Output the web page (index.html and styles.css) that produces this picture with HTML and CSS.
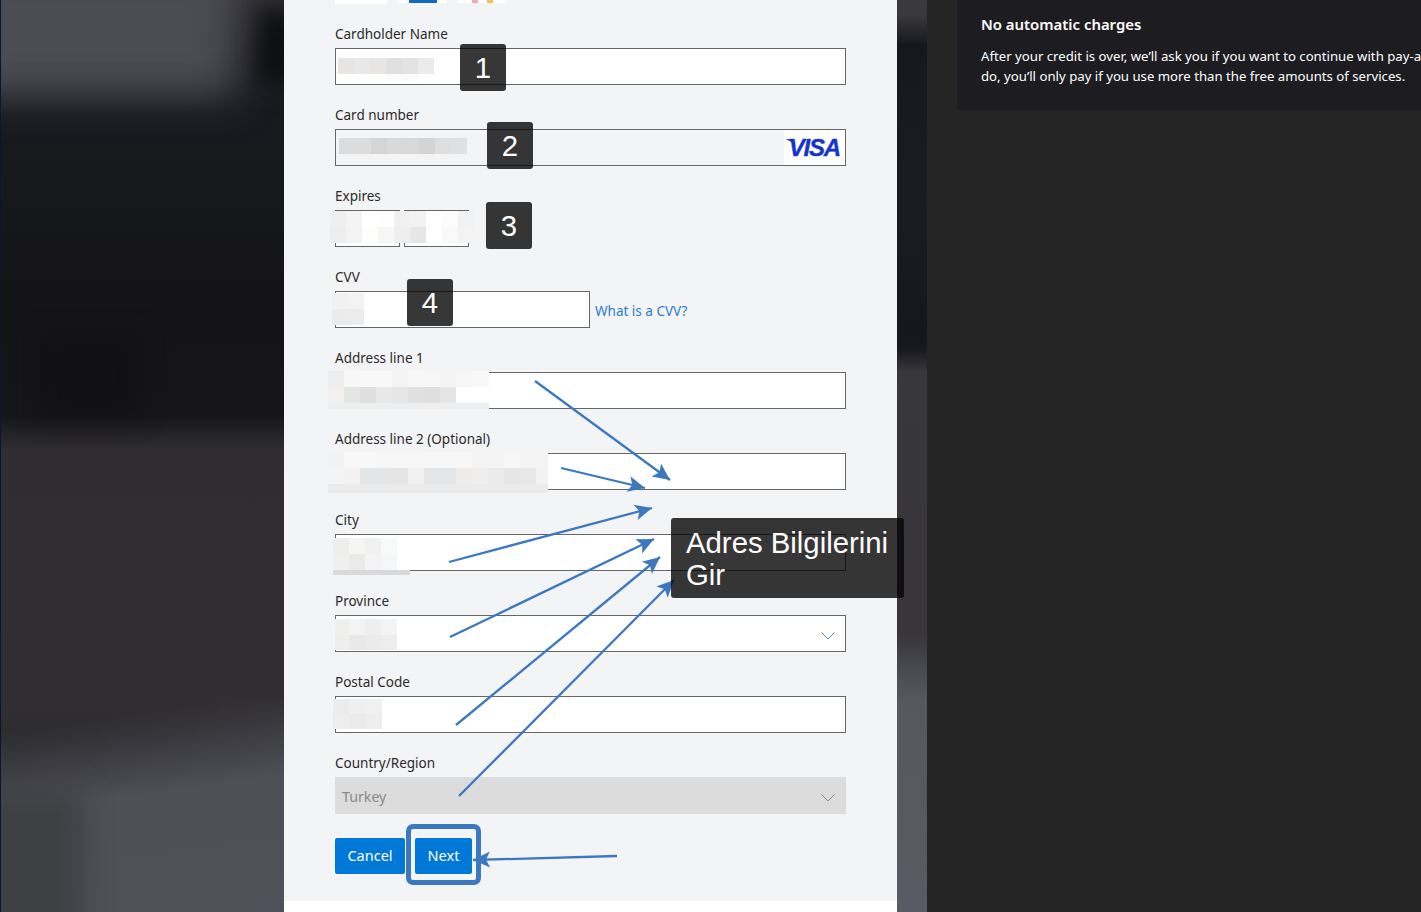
FILE: index.html
```html
<!DOCTYPE html>
<html lang="en">
<head>
<meta charset="utf-8">
<title>Billing form</title>
<link rel="stylesheet" href="styles.css">
</head>
<body>
<div class="page">
  <div class="backdrop">
    <div class="blob blob-top"></div>
    <div class="blob blob-corner"></div>
    <div class="blob blob-mid"></div>
    <div class="blob blob-low"></div>
    <div class="blob blob-patch"></div>
    <div class="blob blob-strip"></div>
    <div class="blob blob-rim"></div>
    <div class="sheet">
      <main class="form">
        <div class="logos">
          <span class="logo logo-a"></span>
          <span class="logo logo-b"></span>
          <span class="logo logo-c"></span>
        </div>
        <div class="field">
          <label class="label">Cardholder Name</label>
          <div class="input"></div>
        </div>
        <div class="field">
          <label class="label">Card number</label>
          <div class="input input-card">
            <span class="visa">
              <svg class="visa-flick" width="10" height="8" viewBox="0 0 10 8"><path d="M0 0H7.5L9.5 7.5 7 4Z" fill="#1434cb"/></svg>
              <span class="visa-text">VISA</span>
            </span>
          </div>
        </div>
        <div class="field">
          <label class="label">Expires</label>
          <div class="split">
            <div class="input input-date"></div>
            <div class="input input-date"></div>
          </div>
        </div>
        <div class="field">
          <label class="label">CVV</label>
          <div class="split split-cvv">
            <div class="input input-cvv"></div>
            <a class="link" href="#">What is a CVV?</a>
          </div>
        </div>
        <div class="field">
          <label class="label">Address line 1</label>
          <div class="input"></div>
        </div>
        <div class="field">
          <label class="label">Address line 2 (Optional)</label>
          <div class="input"></div>
        </div>
        <div class="field">
          <label class="label">City</label>
          <div class="input"></div>
        </div>
        <div class="field">
          <label class="label">Province</label>
          <div class="input input-select">
            <svg class="chevron" width="14" height="8" viewBox="0 0 14 8"><path d="M.5.5 7 7 13.5.5" fill="none" stroke="#5d89b5" stroke-width="1"/></svg>
          </div>
        </div>
        <div class="field">
          <label class="label">Postal Code</label>
          <div class="input"></div>
        </div>
        <div class="field">
          <label class="label">Country/Region</label>
          <div class="input input-disabled">
            <span>Turkey</span>
            <svg class="chevron" width="14" height="8" viewBox="0 0 14 8"><path d="M.5.5 7 7 13.5.5" fill="none" stroke="#8a8a8a" stroke-width="1"/></svg>
          </div>
        </div>
        <div class="actions">
          <button class="btn btn-cancel">Cancel</button>
          <button class="btn btn-next">Next</button>
        </div>
      </main>
      <div class="sheet-foot"></div>
    </div>
  </div>
  <aside class="side">
    <section class="note">
      <h2 class="note-title">No automatic charges</h2>
      <p class="note-text">After your credit is over, we’ll ask you if you want to continue with pay-as-you-go. If you<br>do, you’ll only pay if you use more than the free amounts of services.</p>
    </section>
  </aside>

  <div class="pix pix-name"></div>
  <div class="pix pix-name-low"></div>
  <div class="pix pix-card"></div>
  <div class="pix pix-exp"></div>
  <div class="pix pix-cvv"></div>
  <div class="pix pix-addr1"></div>
  <div class="pix pix-addr2"></div>
  <div class="pix pix-city"></div>
  <div class="pix pix-prov"></div>
  <div class="pix pix-post"></div>

  <svg class="arrows" width="1421" height="912" viewBox="0 0 1421 912">
    <defs>
      <marker id="head" markerUnits="userSpaceOnUse" markerWidth="20" markerHeight="18" refX="18" refY="9" orient="auto">
        <path d="M18 9 1 1 5 9 1 17Z" fill="#3b78c0"/>
      </marker>
    </defs>
    <g fill="none" stroke="#3b78c0" stroke-width="2.3">
      <line x1="535" y1="381" x2="670" y2="480" marker-end="url(#head)"/>
      <line x1="561" y1="468" x2="645" y2="488" marker-end="url(#head)"/>
      <line x1="449" y1="562" x2="652" y2="508" marker-end="url(#head)"/>
      <line x1="450" y1="637" x2="654" y2="539" marker-end="url(#head)"/>
      <line x1="456" y1="725" x2="660" y2="557" marker-end="url(#head)"/>
      <line x1="459" y1="796" x2="674" y2="580" marker-end="url(#head)"/>
      <line x1="617" y1="856" x2="473" y2="860" marker-end="url(#head)"/>
    </g>
  </svg>
  <div class="next-ring"></div>

  <div class="badge badge-1">1</div>
  <div class="badge badge-2">2</div>
  <div class="badge badge-3">3</div>
  <div class="badge badge-4">4</div>
  <div class="callout">Adres Bilgilerini Gir</div>
</div>
</body>
</html>
```
FILE: styles.css
```css
* { box-sizing: border-box; }
html, body { margin: 0; padding: 0; }
body { width: 1421px; height: 912px; overflow: hidden; background: #252525; font-family: "Noto Sans", "Open Sans", sans-serif; }
.page { position: relative; display: flex; width: 1421px; height: 912px; overflow: hidden; }

.backdrop {
  position: relative; width: 927px; height: 912px; overflow: hidden; flex: none;
  background: linear-gradient(180deg, #302f33 0, #2a2a2e 30px, #191a1f 110px, #18191d 170px, #141417 300px, #16161a 415px, #2f2d31 450px, #302e32 700px, #2c2b2e 740px, #2c2b2e 912px);
}
.blob { position: absolute; }
.blob-top { left: -40px; top: -40px; width: 275px; height: 135px; background: #4c4c55; filter: blur(20px); }
.blob-corner { left: 258px; top: 10px; width: 40px; height: 75px; background: #0c0d10; filter: blur(12px); }
.blob-mid { left: 40px; top: 335px; width: 100px; height: 80px; background: #111012; filter: blur(12px); }
.blob-low { left: -40px; top: 700px; width: 400px; height: 260px; background: linear-gradient(172deg, rgba(79, 79, 88, 0) 12%, rgba(79, 79, 88, 1) 38%, #50505a 100%); }
.blob-patch { left: -30px; top: 790px; width: 112px; height: 150px; background: #3f4043; filter: blur(14px); }
.blob-strip {
  left: 897px; top: 0; width: 30px; height: 912px;
  background: linear-gradient(180deg, #3a393d 0, #39383c 15px, #17181d 45px, #1a1c22 200px, #15171c 335px, #19191f 350px, #38373c 372px, #38363b 636px, #4a4a52 670px, #57575f 700px, #5a5a66 912px);
}
.blob-rim { left: 0; top: 0; width: 1px; height: 912px; background: #0a1630; }

.sheet { position: relative; margin-left: 284px; width: 613px; height: 912px; background: #fff; display: flex; flex-direction: column; }
.form { height: 901px; background: #f3f4f6; padding-left: 51px; color: #2b2b2b; font-size: 14px; }
.sheet-foot { flex: 1; background: #fff; }

.logos { display: flex; height: 24px; align-items: flex-start; }
.logo { display: block; background: #fff; height: 3px; }
.logo-a { width: 52px; height: 4px; margin-right: 11px; }
.logo-b { width: 48px; margin-right: 12px; background: linear-gradient(90deg, #fff 0 11px, #0f6cbd 11px 39px, #fff 39px); }
.logo-c { width: 48px; background: linear-gradient(90deg, #fff 0 14px, #f3a9b4 14px 20px, #fff 20px 29px, #f5c25a 29px 35px, #fff 35px); }

.field { height: 81px; }
.label { display: block; height: 20px; line-height: 20px; margin-bottom: 4px; font-size: 13.5px; color: #2a2a2a; }
.input { position: relative; width: 511px; height: 37px; background: #fff; border: 1px solid #666; display: flex; align-items: center; }
.input-card { background: #f3f4f6; justify-content: flex-end; }
.visa { position: relative; display: flex; align-items: center; justify-content: flex-end; width: 61px; height: 35px; background: #fff; padding-right: 5px; }
.visa-text { font: italic 700 24px/1 "Liberation Sans", sans-serif; color: #1434cb; letter-spacing: -1.2px; -webkit-text-stroke: .35px #1434cb; }
.visa-flick { position: absolute; left: 2px; top: 9px; }
.split { display: flex; gap: 4px; }
.split-cvv { gap: 5px; align-items: center; }
.input-date { width: 65px; }
.input-cvv { width: 255px; }
.link { font-size: 13.5px; color: #2b7cd3; text-decoration: none; position: relative; top: 1px; }
.input-select, .input-disabled { justify-content: space-between; }
.chevron { position: absolute; right: 10px; top: 16px; }
.input-disabled { background: #dcdcdc; border: 0; padding: 2px 0 0 7px; color: #8a8a8a; font-size: 14.2px; }
.input-disabled .chevron { top: 17px; right: 11px; }
.actions { display: flex; gap: 10px; margin-top: -20px; padding-top: 24px; }
.btn { height: 36px; border: 0; border-radius: 2px; background: #0078d7; color: #fff; font: 14.5px "Noto Sans", sans-serif; padding: 0 0 2px; }
.btn-cancel { width: 70px; }
.btn-next { width: 57px; }

.side { flex: 1; background: #252525; padding-left: 30px; }
.note { height: 110px; width: 464px; background: #1d1d21; border-radius: 0 0 0 4px; padding: 14px 0 0 24px; color: #fff; overflow: hidden; }
.note-title { margin: 0 0 12px; font-size: 14.9px; line-height: 20px; font-weight: 600; }
.note-text { margin: 0; font-size: 13.2px; line-height: 20px; white-space: nowrap; }

.pix { position: absolute; background-repeat: no-repeat; }
.pix-name { left: 338px; top: 58px; width: 96px; height: 16px; background-image: linear-gradient(90deg, #e6e5e3 0 16px, #e8e8e8 0 32px, #e7e6e4 0 48px, #dfe0df 0 64px, #e3e3e3 0 80px, #ebebeb 0); }
.pix-name-low { left: 386px; top: 74px; width: 32px; height: 7px; background: #fcfbfa; }
.pix-card { left: 339px; top: 138px; width: 128px; height: 16px; background-image: linear-gradient(90deg, #dcdcdc 0 32px, #d5d5d5 0 48px, #d9d9d9 0 64px, #d8d8d8 0 80px, #d4d4d4 0 96px, #dedede 0 112px, #dfe0e2 0); }
.pix-exp { left: 330px; top: 211px; width: 144px; height: 32px; background-image: linear-gradient(90deg, #efefef 0 16px, #f4f4f4 0 32px, #fff 0 48px, #fefefe 0 64px, #f0f0f0 0 80px, #f2f2f2 0 96px, #fff 0 112px, #fcfcfc 0 128px, #f2f2f2 0), linear-gradient(90deg, #eee 0 16px, #f3f3f3 0 32px, #fefefd 0 48px, #f7f7f7 0 64px, #eee 0 80px, #e6e6e6 0 96px, #fff 0 112px, #f9f9f9 0 128px, #f3f3f3 0); background-size: 100% 16px; background-position: 0 0, 0 16px; }
.pix-cvv { left: 332px; top: 293px; width: 32px; height: 32px; background-image: linear-gradient(90deg, #f1f1f1 0 16px, #f3f3f3 0), linear-gradient(90deg, #ebebeb 0 16px, #ececec 0); background-size: 100% 16px; background-position: 0 0, 0 16px; }
.pix-addr1 { left: 328px; top: 371px; width: 161px; height: 38px; background-image: linear-gradient(90deg, #eee 0 16px, #f7f7f7 0 32px, #f8f8f8 0 64px, #f3f3f3 0 80px, #f7f7f7 0 96px, #f6f6f6 0 112px, #f4f4f4 0 128px, #f6f6f6 0 144px, #f8f8f8 0), linear-gradient(90deg, #f2f1ee 0 16px, #e4e6e5 0 32px, #dfdfde 0 48px, #e7e8e7 0 64px, #e6e6e6 0 80px, #e0e0e0 0 96px, #dfdedc 0 112px, #e5e5e5 0 128px, #fff 0), linear-gradient(#eee, #eee); background-size: 100% 16px, 100% 16px, 100% 6px; background-position: 0 0, 0 16px, 0 32px; }
.pix-addr2 { left: 328px; top: 452px; width: 220px; height: 41px; background-image: linear-gradient(90deg, #f2f2f2 0 16px, #f8f8f8 0 48px, #f6f6f6 0 96px, #f7f7f7 0 144px, #f3f3f3 0 176px, #f6f6f6 0 192px, #f3f3f3 0), linear-gradient(90deg, #f3f3f3 0 16px, #f3f1f1 0 32px, #e4e5e6 0 64px, #e4e4e4 0 80px, #f1f1f1 0 96px, #e4e6e8 0 128px, #efebe8 0 144px, #eee 0 160px, #ebebeb 0 176px, #e5e6e6 0 192px, #e7e7e7 0 208px, #f2f2f2 0), linear-gradient(#ebebeb, #ebebeb); background-size: 100% 16px, 100% 16px, 100% 9px; background-position: 0 0, 0 16px, 0 32px; }
.pix-city { left: 333px; top: 538px; width: 77px; height: 37px; background-image: linear-gradient(90deg, #eeeeec 0 16px, #f5f5f3 0 32px, #f1f1f1 0 48px, #f8faf9 0 64px, transparent 0), linear-gradient(90deg, #efefed 0 16px, #eaeaea 0 32px, #f3f3f3 0 48px, #f4f6f8 0 64px, transparent 0), linear-gradient(#d9d9dc, #d9d9dc); background-size: 100% 16px, 100% 16px, 100% 5px; background-position: 0 0, 0 16px, 0 32px; }
.pix-prov { left: 335px; top: 619px; width: 62px; height: 31px; background-image: linear-gradient(90deg, #efefed 0 14px, #f3f3f3 0 30px, #eeeeee 0 46px, #f3f3f3 0), linear-gradient(90deg, #eeeeec 0 14px, #e9e9e9 0 30px, #ebebeb 0 46px, #ededed 0); background-size: 100% 16px, 100% 15px; background-position: 0 0, 0 16px; }
.pix-post { left: 333px; top: 699px; width: 49px; height: 30px; background-image: linear-gradient(90deg, #ececec 0 17px, #efefef 0 33px, #f0f0f0 0), linear-gradient(90deg, #ededed 0 17px, #ebebeb 0 33px, #eeeeee 0); background-size: 100% 15px; background-position: 0 0, 0 15px; }

.arrows { position: absolute; left: 0; top: 0; pointer-events: none; }
.next-ring { position: absolute; left: 406px; top: 824px; width: 75px; height: 61px; border: 5px solid #3b78c0; border-radius: 7px; }

.badge, .callout { position: absolute; background: rgba(5, 5, 5, .8); color: #fff; border-radius: 3px; font-family: "Liberation Sans", Arial, sans-serif; font-size: 29.33px; }
.badge { width: 46px; height: 47px; display: flex; align-items: center; justify-content: center; }
.badge-1 { left: 460px; top: 44px; }
.badge-2 { left: 487px; top: 122px; }
.badge-3 { left: 486px; top: 202px; }
.badge-4 { left: 407px; top: 279px; }
.callout { left: 671px; top: 518px; width: 233px; height: 80px; padding: 9px 10px 0 15px; line-height: 32px; }
```
